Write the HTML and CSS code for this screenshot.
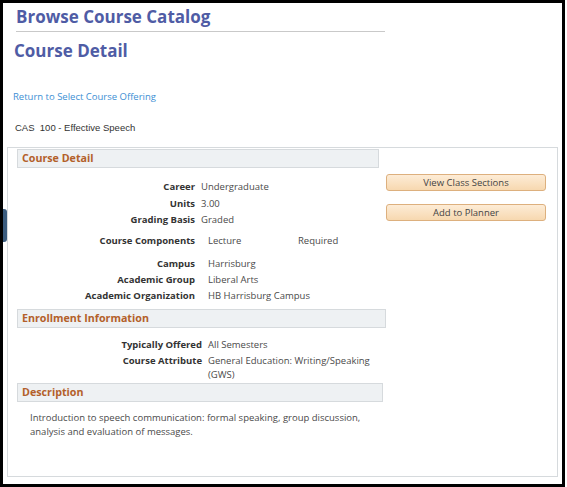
FILE: index.html
```html
<!DOCTYPE html>
<html lang="en">
<head>
<meta charset="utf-8">
<title>Course Detail</title>
<link rel="stylesheet" href="styles.css">
</head>
<body>
<div class="frame">
  <div class="tab"></div>
  <div class="page-head">
    <h1 class="title">Browse Course Catalog</h1>
  </div>
  <h2 class="subtitle">Course Detail</h2>
  <div class="back"><a href="#">Return to Select Course Offering</a></div>
  <div class="course-name">CAS&nbsp; 100 - Effective Speech</div>

  <div class="panel">
    <div class="left">
      <div class="sec-head sec-course">Course Detail</div>
      <div class="fields g1">
        <div class="lbl">Career</div><div class="val">Undergraduate</div>
        <div class="lbl">Units</div><div class="val">3.00</div>
        <div class="lbl">Grading Basis</div><div class="val">Graded</div>
      </div>
      <div class="fields g2">
        <div class="lbl">Course Components</div>
        <div class="val comp"><span class="comp-type">Lecture</span><span>Required</span></div>
      </div>
      <div class="fields g3">
        <div class="lbl">Campus</div><div class="val">Harrisburg</div>
        <div class="lbl">Academic Group</div><div class="val">Liberal Arts</div>
        <div class="lbl">Academic Organization</div><div class="val">HB Harrisburg Campus</div>
      </div>

      <div class="sec-head sec-enroll">Enrollment Information</div>
      <div class="fields g4">
        <div class="lbl">Typically Offered</div><div class="val">All Semesters</div>
        <div class="lbl">Course Attribute</div><div class="val wrap">General Education: Writing/Speaking (GWS)</div>
      </div>

      <div class="sec-head sec-desc">Description</div>
      <p class="desc">Introduction to speech communication: formal speaking, group discussion, analysis and evaluation of messages.</p>
    </div>
    <div class="right">
      <button class="btn" type="button">View Class Sections</button>
      <button class="btn btn-second" type="button">Add to Planner</button>
    </div>
  </div>
</div>
</body>
</html>
```

FILE: styles.css
```css
html, body {
  margin: 0;
  padding: 0;
  background: #ffffff;
}

body {
  font-family: "Open Sans", "Liberation Sans", sans-serif;
  font-size: 9.5px;
  color: #444444;
}

.frame {
  position: relative;
  box-sizing: border-box;
  width: 565px;
  height: 487px;
  border: 3px solid #000000;
  padding-left: 4px;
}

.tab {
  position: absolute;
  left: 0;
  top: 206px;
  width: 4px;
  height: 33px;
  background: #3b5c7e;
  border-radius: 0 3px 3px 0;
}

.page-head {
  margin: 4px 0 0 9px;
  width: 369px;
  padding-bottom: 4px;
  border-bottom: 1px solid #c9c9c9;
}

.title,
.subtitle {
  margin: 0;
  font-size: 17px;
  line-height: 20px;
  font-weight: 700;
  color: #4f5ca5;
}

.subtitle {
  margin: 9px 0 0 7px;
}

.back {
  margin: 29px 0 0 6px;
  font-size: 9.5px;
  line-height: 14px;
}

.back a {
  color: #3d8fd4;
  text-decoration: none;
}

.course-name {
  margin: 17px 0 0 8px;
  font-family: "Liberation Sans", Arial, sans-serif;
  font-size: 9.5px;
  line-height: 14px;
  color: #333333;
}

.panel {
  margin-top: 12px;
  box-sizing: border-box;
  width: 551px;
  height: 330px;
  border: 1px solid #d6dadd;
  display: flex;
  align-items: flex-start;
}

.left {
  box-sizing: border-box;
  width: 378px;
  padding-left: 9px;
  padding-top: 1px;
}

.sec-head {
  box-sizing: border-box;
  height: 19px;
  line-height: 17px;
  padding-left: 4px;
  background: #eef1f3;
  border: 1px solid #d6dadd;
  color: #b3602a;
  font-size: 10.7px;
  font-weight: 700;
}

.sec-course { width: 362px; }
.sec-enroll { width: 369px; margin-top: 5px; }
.sec-desc { width: 366px; margin-top: 1px; }

.fields {
  display: grid;
  grid-template-columns: 178px 1fr;
  column-gap: 6px;
  line-height: 16px;
}

.g1 {
  margin-top: 11px;
  line-height: 16.5px;
}
.g2 { margin-top: 4px; column-gap: 13px; }
.g3 { margin-top: 7px; column-gap: 13px; }
.g4 {
  margin-top: 9px;
  grid-template-columns: 185px 1fr;
  width: 369px;
}

.lbl {
  text-align: right;
  font-weight: 700;
  color: #333333;
}

.val {
  color: #4a4a4a;
}

.comp {
  display: flex;
}

.comp-type {
  width: 90px;
}

.wrap {
  line-height: 14px;
  padding-top: 1px;
}

.desc {
  margin: 9px 0 0 13px;
  width: 356px;
  line-height: 14px;
  color: #4a4a4a;
}

.right {
  display: flex;
  flex-direction: column;
  margin-top: 26px;
}

.btn {
  box-sizing: border-box;
  width: 160px;
  height: 17px;
  padding: 0;
  font-family: "Open Sans", "Liberation Sans", sans-serif;
  font-size: 9.5px;
  line-height: 15px;
  color: #444444;
  background: linear-gradient(#fdecd6, #f7d8b0);
  border: 1px solid #ddb07e;
  border-radius: 3px;
}

.btn-second {
  margin-top: 13px;
}
```
